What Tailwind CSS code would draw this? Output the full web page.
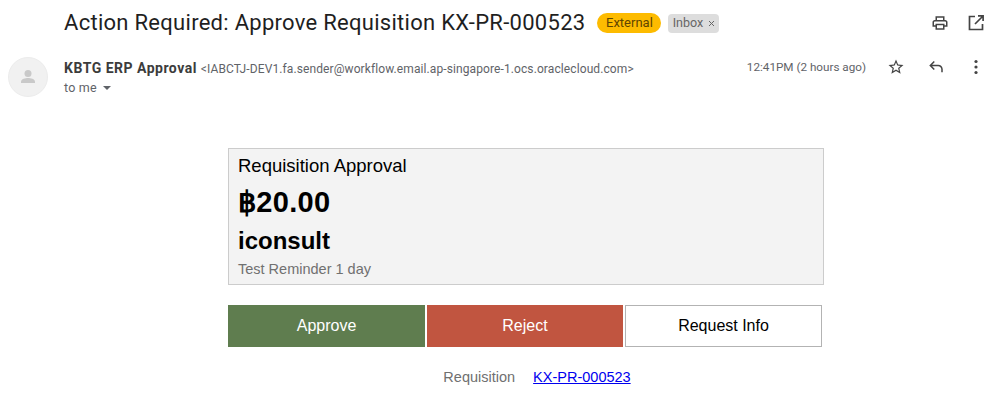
<!DOCTYPE html>
<html>
<head>
<meta charset="utf-8">
<script src="https://cdn.jsdelivr.net/npm/@tailwindcss/browser@4"></script>
</head>
<body class="bg-white w-[1000px] h-[412px] overflow-hidden font-['Roboto',sans-serif]">
<header class="h-[46px] flex items-center pl-[64px] pr-[15px]">
  <h1 class="text-[22px] leading-[28px] tracking-[0.28px] text-[#1f1f1f] font-normal whitespace-nowrap">Action Required: Approve Requisition KX-PR-000523</h1>
  <span class="ml-[12px] h-[20px] w-[64px] flex items-center justify-center rounded-full bg-[#fdbb00] text-[13px] text-[#5f4500]">External</span>
  <span class="ml-[7px] h-[19px] w-[51px] flex items-center justify-center gap-[5px] rounded-[4px] bg-[#dddddd] text-[12.500px] text-[#666]">Inbox<svg width="7" height="7" viewBox="0 0 7 7"><path d="M1 1l5 5M6 1L1 6" stroke="#666" stroke-width="1"/></svg></span>
  <div class="ml-auto flex items-center gap-[18px]">
    <svg width="18" height="18" viewBox="0 0 24 24" fill="#444"><path d="M19 8h-1V3H6v5H5c-1.660 0-3 1.340-3 3v6h4v4h12v-4h4v-6c0-1.660-1.340-3-3-3zM8 5h8v3H8V5zm8 14H8v-4h8v4zm2-4v-2H6v2H4v-4c0-.55.45-1 1-1h14c.55 0 1 .45 1 1v4h-2z"/></svg>
    <svg width="18" height="18" viewBox="0 0 18 18" fill="none" stroke="#444" stroke-width="1.700"><path d="M8 2.500H2.500v13h13V10"/><path d="M11 1.900h5.100V7M16 2L8 10"/></svg>
  </div>
</header>
<section class="h-[62px] flex pl-[8px] pr-[15px] pt-[11px]">
  <div class="w-[40px] h-[40px] rounded-full bg-[#f1f1f1] border border-[#ececec] flex items-center justify-center shrink-0">
    <svg width="20" height="20" viewBox="0 0 20 20" fill="#c9c9c9"><circle cx="10" cy="6.500" r="3.500"/><path d="M3 16v-1.500c0-2.500 4.500-3.500 7-3.500s7 1 7 3.500V16z"/></svg>
  </div>
  <div class="ml-[16px] min-w-0 pt-[2px]">
    <div class="flex items-baseline h-[18px] leading-[18px] whitespace-nowrap">
      <span class="text-[14px] tracking-[0.5px] font-bold text-[#3c3c3c]">KBTG ERP Approval</span>
      <span class="ml-[4px] text-[12px] tracking-[0.1px] text-[#5f6368]">&lt;IABCTJ-DEV1.fa.sender@workflow.email.ap-singapore-1.ocs.oraclecloud.com&gt;</span>
    </div>
    <div class="flex items-center h-[18px] mt-[2px] text-[12.500px] tracking-[0.2px] text-[#5f6368]">to me<span class="ml-[6px] w-0 h-0 border-x-[4px] border-x-transparent border-t-[4px] border-t-[#5f6368]"></span></div>
  </div>
  <div class="ml-auto flex items-start pt-[1px]">
    <span class="text-[11.700px] leading-[18px] text-[#5f6368] whitespace-nowrap">12:41PM (2 hours ago)</span>
    <div class="ml-[21px] flex items-center gap-[22px]">
      <svg width="18" height="18" viewBox="0 0 24 24" fill="#444"><path d="M22 9.240l-7.190-.62L12 2 9.190 8.630 2 9.240l5.460 4.730L5.820 21 12 17.270 18.180 21l-1.630-7.030L22 9.240zM12 15.400l-3.760 2.270 1-4.280-3.320-2.880 4.380-.38L12 6.100l1.710 4.040 4.380.38-3.320 2.880 1 4.280L12 15.400z"/></svg>
      <svg width="18" height="18" viewBox="0 0 24 24" fill="#444"><path d="M21 19v-4c0-3.300-2.700-6-6-6H6.800l3.600-3.600L9 4l-6 6 6 6 1.400-1.400L6.800 11H15c2.200 0 4 1.800 4 4v4h2z"/></svg>
      <svg width="18" height="18" viewBox="0 0 18 18" fill="#444"><circle cx="9" cy="3.500" r="1.600"/><circle cx="9" cy="9" r="1.600"/><circle cx="9" cy="14.500" r="1.600"/></svg>
    </div>
  </div>
</section>
<main class="pl-[228px] pt-[40px] font-['Liberation_Sans',sans-serif]">
  <div class="w-[596px] h-[137px] border border-[#cccccc] bg-[#f3f3f3] pl-[9px] text-black">
    <div class="text-[18.500px] leading-[21px] pt-[6px]">Requisition Approval</div>
    <div class="text-[29px] tracking-[0.3px] leading-[32px] font-bold mt-[10px]">฿20.00</div>
    <div class="text-[24px] leading-[28px] font-bold mt-[9px]">iconsult</div>
    <div class="text-[14.500px] leading-[16px] text-[#707070] mt-[6px]">Test Reminder 1 day</div>
  </div>
  <div class="flex gap-[2px] mt-[20px] h-[42px] w-[594px] text-[16px]">
    <div class="w-[197px] bg-[#5f7d4f] text-white flex items-center justify-center">Approve</div>
    <div class="w-[196px] bg-[#c15540] text-white flex items-center justify-center">Reject</div>
    <div class="w-[197px] bg-white border border-[#b3b3b3] text-black flex items-center justify-center">Request Info</div>
  </div>
  <div class="w-[596px] mt-[21px] flex justify-center gap-[18px] text-[14.500px] leading-[18px] pl-[22px]">
    <span class="text-[#707070]">Requisition</span>
    <a class="text-[#0000ee] underline">KX-PR-000523</a>
  </div>
</main>
</body>
</html>
